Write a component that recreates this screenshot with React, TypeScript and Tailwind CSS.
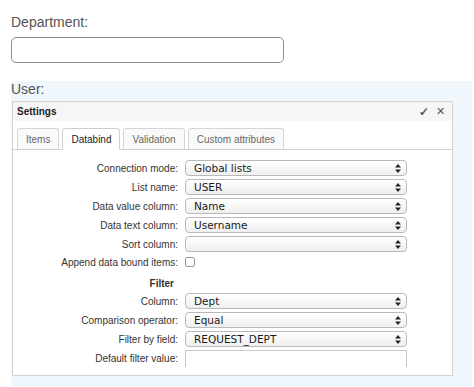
import React from "react";

const rows = [
  { label: "Connection mode:", value: "Global lists" },
  { label: "List name:", value: "USER" },
  { label: "Data value column:", value: "Name" },
  { label: "Data text column:", value: "Username" },
  { label: "Sort column:", value: "" },
];

const filterRows = [
  { label: "Column:", value: "Dept" },
  { label: "Comparison operator:", value: "Equal" },
  { label: "Filter by field:", value: "REQUEST_DEPT" },
];

const tabs = ["Items", "Databind", "Validation", "Custom attributes"];

function Arrows() {
  return (
    <svg width="6" height="9" viewBox="0 0 6 9" className="shrink-0">
      <path d="M3 0 L6 3.5 L0 3.5 Z" fill="#222" />
      <path d="M3 9 L6 5.5 L0 5.5 Z" fill="#222" />
    </svg>
  );
}

function SelectBox({ value }: { value: string }) {
  return (
    <div className="flex items-center w-[222px] h-[16px] rounded-[4px] border border-[#b9b9b9] bg-gradient-to-b from-white to-[#efefef] pl-[8px] pr-[5px]">
      <span className="flex-1 text-[10.5px] leading-[14px] text-[#1a1a1a] font-['DejaVu_Sans',sans-serif] truncate">
        {value}
      </span>
      <Arrows />
    </div>
  );
}

function FieldRow({ label, children }: { label: string; children: React.ReactNode }) {
  return (
    <div className="flex items-center h-[16px] mb-[3px]">
      <div className="w-[172px] pr-[7px] text-right text-[10px] text-[#333]">{label}</div>
      {children}
    </div>
  );
}

export default function App() {
  return (
    <div className="w-[474px] h-[387px] bg-white overflow-hidden font-['Liberation_Sans',Arial,sans-serif]">
      {/* Department */}
      <div className="pl-[11px] pt-[12px]">
        <div className="text-[14px] leading-[20px] text-[#555]">Department:</div>
        <div className="mt-[5px] w-[273px] h-[26px] rounded-[5px] border border-[#8f8f8f] bg-white" />
      </div>

      {/* User */}
      <div className="ml-[11px] mr-[2px] mt-[18px] h-[305px] bg-[#eff6fc]">
        <div className="text-[14px] leading-[16px] text-[#555]">User:</div>

        <div className="ml-px mt-[4px] w-[441px] h-[275px] border border-[#d4d4d4] bg-white flex flex-col">
          {/* Header */}
          <div className="flex items-center h-[19px] shrink-0 bg-[#f6f6f6] pl-[4px] pr-[7px]">
            <span className="flex-1 text-[10px] font-bold text-[#222]">Settings</span>
            <span className="text-[12px] leading-none font-bold text-[#555] mr-[7px]">✓</span>
            <span className="text-[11px] leading-none text-[#555]">✕</span>
          </div>

          {/* Tabs */}
          <div className="flex items-end gap-[3px] pl-[4px] pt-[7px] shrink-0 border-b border-[#cfcfcf]">
            {tabs.map((t) => (
              <div
                key={t}
                className={
                  t === "Databind"
                    ? "h-[22px] -mb-px px-[8px] flex items-center rounded-t-[3px] border border-b-0 border-[#cfcfcf] bg-white text-[10px] text-[#222]"
                    : "h-[21px] px-[8px] flex items-center rounded-t-[3px] border border-b-0 border-[#d6d6d6] bg-[#fafafa] text-[10px] text-[#666]"
                }
              >
                {t}
              </div>
            ))}
          </div>

          {/* Content */}
          <div className="flex-1 min-h-0 pb-[8px]">
            <div className="h-full overflow-hidden pt-[10px]">
              {rows.map((r) => (
                <FieldRow key={r.label} label={r.label}>
                  <SelectBox value={r.value} />
                </FieldRow>
              ))}
              <div className="flex items-center h-[14px] mb-[9px]">
                <div className="w-[172px] pr-[7px] text-right text-[10px] text-[#333]">Append data bound items:</div>
                <div className="w-[10px] h-[10px] rounded-[2px] border border-[#999] bg-white" />
              </div>
              <div className="w-[172px] pr-[11px] h-[12px] leading-[12px] text-right text-[10px] font-bold text-[#333] mb-[3px]">
                Filter
              </div>
              {filterRows.map((r) => (
                <FieldRow key={r.label} label={r.label}>
                  <SelectBox value={r.value} />
                </FieldRow>
              ))}
              <FieldRow label="Default filter value:">
                <div className="w-[222px] h-[24px] self-start border border-[#c8c8c8] bg-white" />
              </FieldRow>
            </div>
          </div>
        </div>
      </div>
    </div>
  );
}
